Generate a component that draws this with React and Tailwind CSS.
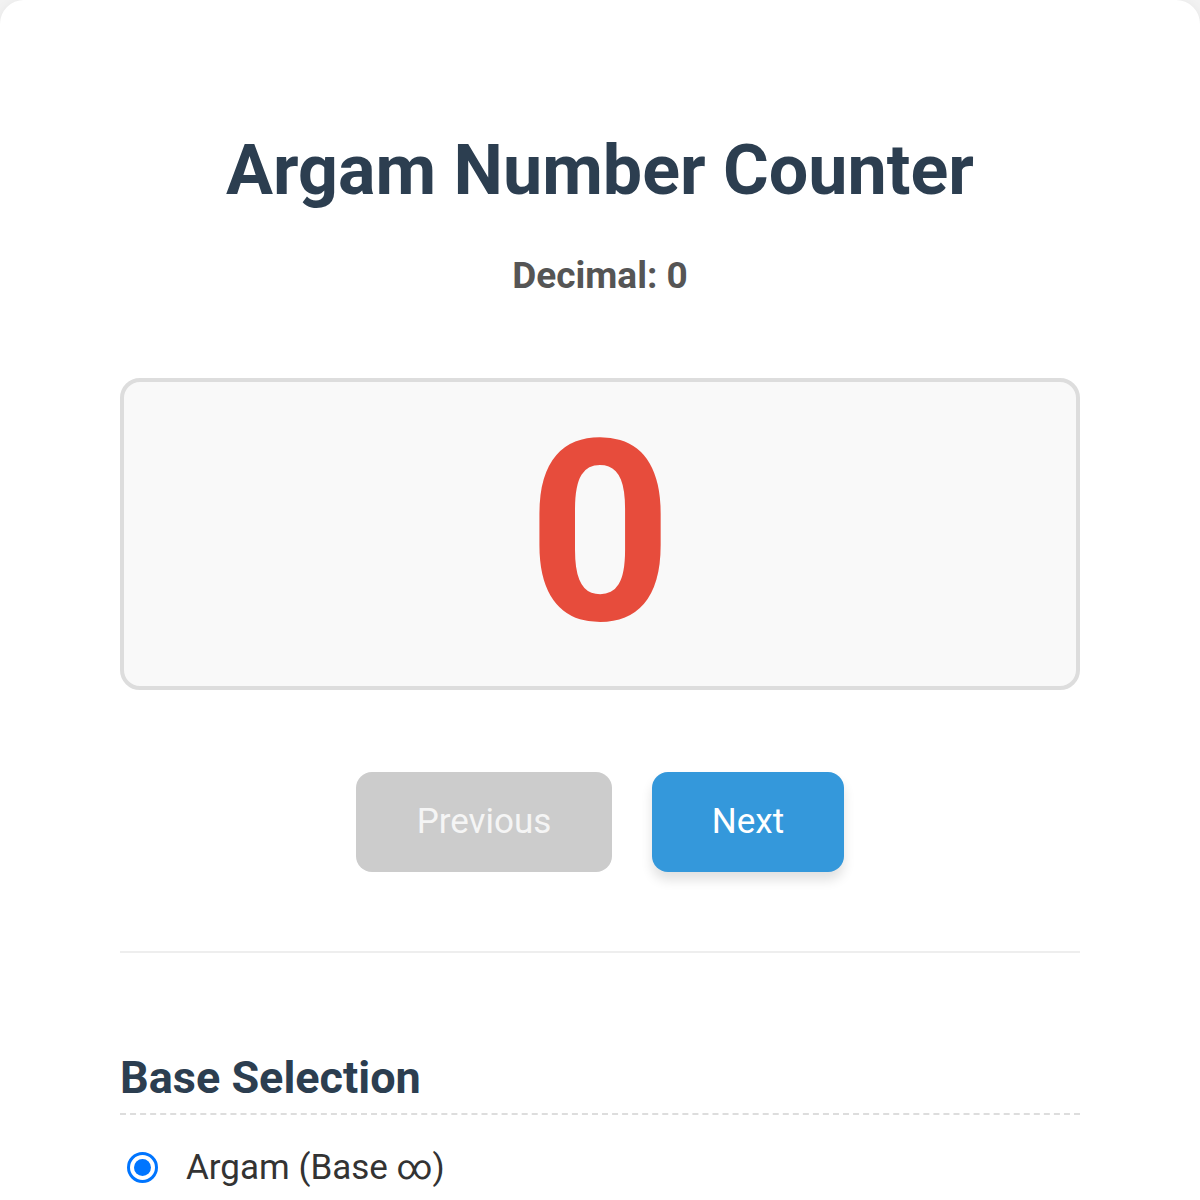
import { useState } from 'react'

const font = { fontFamily: 'Roboto, "Noto Sans", sans-serif' }

function Radio({ checked }) {
  return (
    <span className="w-[31px] h-[31px] rounded-full border-[3px] border-[#0075ff] flex items-center justify-center shrink-0 bg-white">
      {checked && <span className="w-[17px] h-[17px] rounded-full bg-[#0075ff]" />}
    </span>
  )
}

export default function App() {
  const [n, setN] = useState(0)

  return (
    <div className="min-h-screen bg-[#f2f2f2]" style={font}>
      <div className="bg-white rounded-[24px] px-[120px] pt-[135px] pb-[40px] shadow-[0_2px_12px_rgba(0,0,0,0.06)]">
        {/* Header */}
        <h1 className="text-center text-[70px] leading-[70px] font-bold text-[#2c3e50]">
          Argam Number Counter
        </h1>
        <p className="mt-[52px] text-center text-[37px] leading-[37px] font-bold text-[#555]">
          Decimal: {n}
        </p>

        {/* Display */}
        <div className="mt-[84px] h-[312px] border-4 border-[#ddd] rounded-[20px] bg-[#f9f9f9] flex items-center justify-center">
          <span className="text-[252px] leading-[252px] font-bold text-[#e74c3c]">{n}</span>
        </div>

        {/* Controls */}
        <div className="mt-[82px] flex justify-center gap-[40px]">
          <button
            disabled={n === 0}
            onClick={() => setN((v) => Math.max(0, v - 1))}
            className="h-[100px] w-[256px] rounded-[16px] bg-[#ccc] text-[35px] text-[#f5f5f5]"
          >
            Previous
          </button>
          <button
            onClick={() => setN((v) => v + 1)}
            className="h-[100px] w-[192px] rounded-[16px] bg-[#3498db] text-[35px] text-white shadow-[0_8px_12px_rgba(0,0,0,0.12)]"
          >
            Next
          </button>
        </div>

        <div className="mt-[79px] h-[2px] bg-[#eee]" />

        {/* Base selection */}
        <h2 className="mt-[102px] text-[45px] leading-[45px] font-bold text-[#2c3e50] pb-[13px] border-b-2 border-dashed border-[#ddd]">
          Base Selection
        </h2>
        <label className="mt-[35px] flex items-center gap-[28px] pl-[7px]">
          <Radio checked />
          <span className="text-[35px] leading-[35px] text-[#333]">Argam (Base ∞)</span>
        </label>
      </div>
    </div>
  )
}
